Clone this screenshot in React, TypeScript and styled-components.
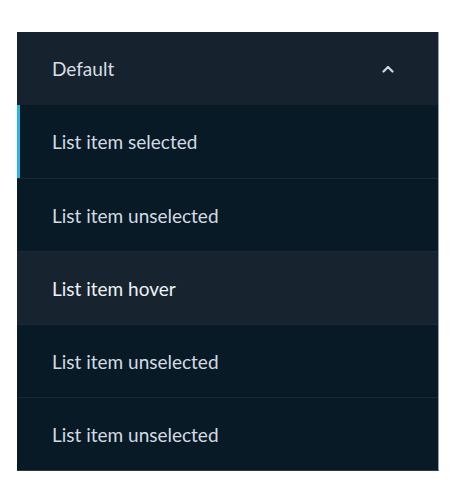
import React from "react";
import styled, { createGlobalStyle } from "styled-components";

const GlobalStyle = createGlobalStyle`
  html, body {
    margin: 0;
    padding: 0;
    background: #ffffff;
  }
  body {
    font-family: Lato, "Noto Sans", sans-serif;
  }
`;

const Page = styled.div`
  padding: 32px 36px 0 17px;
`;

const Panel = styled.div`
  width: 421px;
  background: #071a26;
  border-right: 1px solid #8fa3b0;
  border-bottom: 1px solid #2a3b46;
`;

const Header = styled.div`
  height: 73px;
  display: flex;
  align-items: center;
  justify-content: space-between;
  padding: 0 44px 0 35px;
  background: #16232f;
  color: #d7dee4;
  font-size: 19px;
`;

const Row = styled.div<{ $state: "selected" | "hover" | "default" }>`
  height: 72px;
  display: flex;
  align-items: center;
  padding-left: ${({ $state }) => ($state === "selected" ? "32px" : "35px")};
  border-left: ${({ $state }) =>
    $state === "selected" ? "3px solid #2ab4e2" : "none"};
  border-top: 1px solid #1a2a35;
  background: ${({ $state }) => ($state === "hover" ? "#17242f" : "#071a26")};
  color: ${({ $state }) => ($state === "hover" ? "#eef2f5" : "#d3dbe1")};
  font-size: 19px;

  &:first-of-type {
    border-top: none;
    height: 73px;
  }
`;

const Chevron = () => (
  <svg width="12" height="8" viewBox="0 0 12 8">
    <path
      d="M1.5 6.5 L6 2 L10.5 6.5"
      fill="none"
      stroke="#cfd8df"
      strokeWidth="2.2"
      strokeLinecap="round"
      strokeLinejoin="round"
    />
  </svg>
);

const items: { label: string; state: "selected" | "hover" | "default" }[] = [
  { label: "List item selected", state: "selected" },
  { label: "List item unselected", state: "default" },
  { label: "List item hover", state: "hover" },
  { label: "List item unselected", state: "default" },
  { label: "List item unselected", state: "default" },
];

export default function App() {
  return (
    <>
      <GlobalStyle />
      <Page>
        <Panel>
          <Header>
            <span>Default</span>
            <Chevron />
          </Header>
          <div>
            {items.map((item, i) => (
              <Row key={i} $state={item.state}>
                {item.label}
              </Row>
            ))}
          </div>
        </Panel>
      </Page>
    </>
  );
}
